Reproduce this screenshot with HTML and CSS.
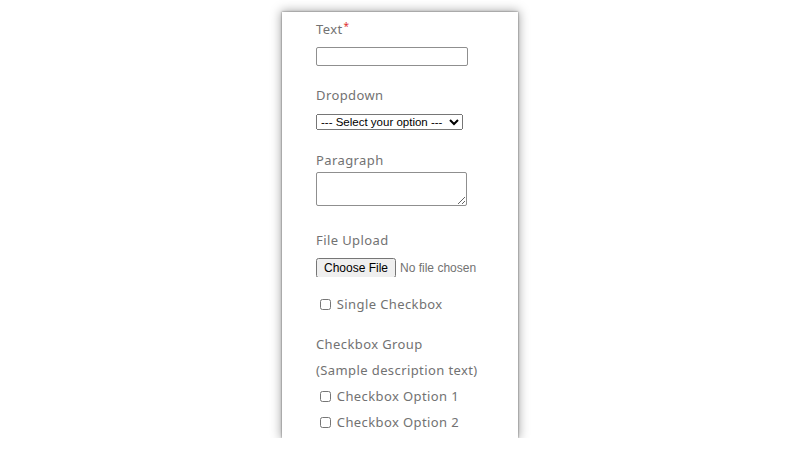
FILE: index.html
```html
<!DOCTYPE html>
<html lang="en">

<head>
    <meta charset="UTF-8" />
    <meta name="viewport" content="width=device-width, initial-scale=1.0" />
    <title>Form</title>
    <link rel="stylesheet" href="styles.css">
</head>

<body>
    <form class="card">
        <div class="field field-text">
            <label class="label" for="text">Text<span class="required">*</span></label>
            <input class="control" type="text" id="text" name="text">
        </div>
        <div class="field field-select">
            <label class="label" for="dropdown">Dropdown</label>
            <select class="control" id="dropdown" name="dropdown">
                <option>--- Select your option ---</option>
            </select>
        </div>
        <div class="field field-area">
            <label class="label" for="paragraph">Paragraph</label>
            <textarea class="control" id="paragraph" name="paragraph"></textarea>
        </div>
        <div class="field field-file">
            <label class="label" for="upload">File Upload</label>
            <input class="control" type="file" id="upload" name="upload">
        </div>
        <label class="check check-single"><input type="checkbox"> Single Checkbox</label>
        <div class="group">
            <div class="group-title">Checkbox Group</div>
            <div class="group-desc">(Sample description text)</div>
            <label class="check"><input type="checkbox"> Checkbox Option 1</label>
            <label class="check"><input type="checkbox"> Checkbox Option 2</label>
        </div>
    </form>
</body>

</html>
```

FILE: styles.css
```css
body,
html {
    margin: 0;
    padding: 0;
    background-color: #fff;
}

.card {
    width: 236px;
    height: 426px;
    margin: 12px auto 0;
    padding: 7px 0 0 34px;
    box-sizing: border-box;
    background-color: #fff;
    box-shadow: 0 0 2px rgba(0,0,0,.55), 0 0 10px 1px rgba(0,0,0,.35);
    font-family: "Noto Sans", "Open Sans", sans-serif;
    font-size: 13px;
    letter-spacing: .4px;
    color: #727272;
}

.field .label {
    display: block;
    line-height: 20px;
}

.required {
    color: #e0312f;
    font-size: 10px;
    vertical-align: top;
    line-height: 14px;
    margin-left: 1px;
}

.control {
    display: block;
    box-sizing: border-box;
    font-family: "Liberation Sans", Arial, sans-serif;
    font-size: 13.33px;
    letter-spacing: 0;
}

.field-text .control {
    margin-top: 8px;
    width: 152px;
    height: 19px;
    border: 1px solid #8f8f8f;
    border-radius: 2px;
}

.field-select {
    margin-top: 19px;
}

.field-select .control {
    margin-top: 9px;
    width: 147px;
    height: 16px;
    padding: 0;
    font-size: 11.5px;
}

.field-area {
    margin-top: 20px;
}

.field-area .control {
    margin-top: 2px;
    width: 151px;
    height: 34px;
    resize: vertical;
    border: 1px solid #8f8f8f;
    border-radius: 2px;
}

.field-file {
    margin-top: 24px;
}

.field-file .control {
    margin-top: 8px;
    height: 19px;
    font-size: 12px;
}

.check {
    display: block;
    line-height: 26px;
}

.check input {
    margin: 0 2px 0 4px;
    width: 11px;
    height: 11px;
    vertical-align: -1px;
}

.check-single {
    margin-top: 14px;
}

.group {
    margin-top: 14px;
}

.group-title,
.group-desc {
    line-height: 26px;
}
```
